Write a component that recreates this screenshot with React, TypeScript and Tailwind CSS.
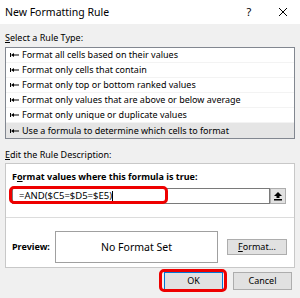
import React from "react";

const Arrow = () => (
  <svg width="9" height="6" viewBox="0 0 9 6" className="shrink-0">
    <rect x="0" y="1" width="1" height="4" fill="#000" />
    <polygon points="1,3 4,1 4,5" fill="#000" />
    <rect x="4" y="2.5" width="5" height="1" fill="#000" />
  </svg>
);

const rules = [
  "Format all cells based on their values",
  "Format only cells that contain",
  "Format only top or bottom ranked values",
  "Format only values that are above or below average",
  "Format only unique or duplicate values",
  "Use a formula to determine which cells to format",
];

export default function App() {
  return (
    <div className="w-[300px] h-[298px] bg-[#f0f0f0] flex flex-col overflow-hidden text-black font-['Segoe_UI','Noto_Sans',sans-serif] text-[9px] leading-[12px]">
      {/* Title bar */}
      <div className="h-[24px] bg-white flex items-center shrink-0">
        <div className="pl-[5px] text-[10.5px] flex-1">New Formatting Rule</div>
        <div className="w-[12px] text-center text-[11px] mr-[23px]">?</div>
        <svg width="10" height="10" viewBox="0 0 10 10" className="mr-[12px]">
          <path d="M1 1 L9 9 M9 1 L1 9" stroke="#000" strokeWidth="1" />
        </svg>
      </div>

      <div className="px-[5px] flex flex-col">
        <div className="mt-[8px]">
          <span className="underline">S</span>elect a Rule Type:
        </div>
        <div className="mt-[3px] w-[290px] border border-[#828790] bg-white flex flex-col">
          {rules.map((r, i) => (
            <div
              key={i}
              className={
                i === 5
                  ? "h-[15px] flex items-center pl-[4px] gap-[3px] bg-[#e5e5e5]"
                  : "h-[15px] flex items-center pl-[4px] gap-[3px] border-b border-[#f3f3f3]"
              }
            >
              <Arrow />
              <span>{r}</span>
            </div>
          ))}
        </div>

        <div className="mt-[10px]">
          <span className="underline">E</span>dit the Rule Description:
        </div>
        <div className="relative mt-[2px] w-[290px] border border-[#c8c8c8] bg-white flex flex-col">
          <div className="px-[6px] pt-[7px] font-bold">
            F<span className="underline">o</span>rmat values where this formula is true:
          </div>
          <div className="flex items-center px-[6px] mt-[5px]">
            <div className="w-[258px] h-[16px] border border-[#7a7a7a] bg-white flex items-center pl-[6px] text-[9.5px]">
              =AND($C5=$D5=$E5)
              <span className="w-px h-[11px] bg-black" />
            </div>
            <div className="w-[16px] h-[16px] border border-[#adadad] bg-[#e1e1e1] flex items-center justify-center">
              <svg width="8" height="9" viewBox="0 0 8 9">
                <polygon points="4,0 8,4 5.5,4 5.5,6 2.5,6 2.5,4 0,4" fill="#000" />
                <rect x="0" y="7" width="8" height="1.5" fill="#000" />
              </svg>
            </div>
          </div>
          <div className="mt-[13px] border-t border-[#dcdcdc]" />
          <div className="flex items-center mt-[13px] pl-[6px]">
            <div className="font-bold w-[43px]">Preview:</div>
            <div className="w-[163px] h-[32px] border border-[#a0a0a0] bg-white flex items-center justify-center text-[10.5px]">
              No Format Set
            </div>
            <div className="ml-[9px] w-[60px] h-[16px] border border-[#adadad] bg-[#e1e1e1] flex items-center justify-center">
              <span className="underline">F</span>ormat...
            </div>
          </div>
          <div className="h-[4px]" />
          <div className="absolute left-[3px] top-[22px] w-[159px] h-[18px] border-[3px] border-[#ee0000] rounded-[5px]" />
        </div>

        <div className="flex justify-end gap-[10px] mt-[4px] mr-[3px]">
          <div className="relative w-[59px] h-[18px] border border-[#0078d7] bg-[#e1e1e1] flex items-center justify-center">
            OK
            <div className="absolute -left-[6px] -right-[5px] -top-[4px] -bottom-[3px] border-[3px] border-[#ee0000] rounded-[5px]" />
          </div>
          <div className="w-[59px] h-[18px] border border-[#adadad] bg-[#e1e1e1] flex items-center justify-center">
            Cancel
          </div>
        </div>
      </div>
    </div>
  );
}
